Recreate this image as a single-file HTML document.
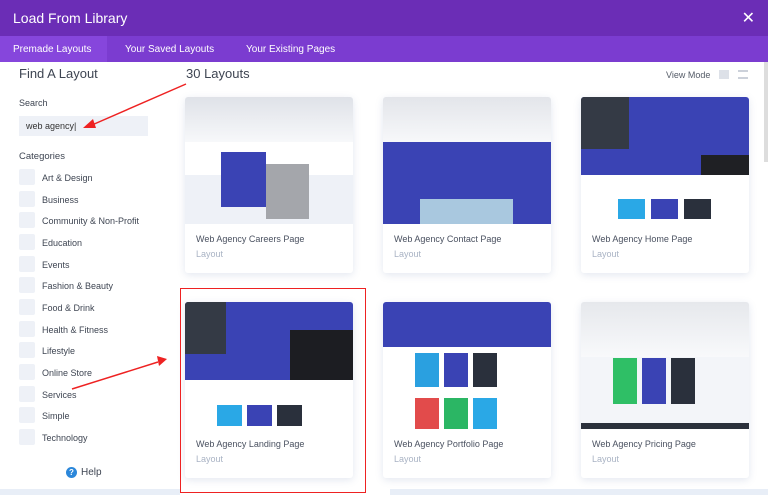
<!DOCTYPE html>
<html><head><meta charset="utf-8"><style>
*{margin:0;padding:0;box-sizing:border-box}
body{width:768px;height:495px;overflow:hidden;background:#fff;font-family:"Liberation Sans",sans-serif;position:relative;color:#32373c}
.hdr{position:absolute;left:0;top:0;width:768px;height:36px;background:#6b2db6;color:#fff;font-size:14px;padding:10px 13px}
.x{position:absolute;right:13px;top:8px;font-size:16px;color:#fff}
.tabs{position:absolute;left:0;top:36px;width:768px;height:26px;background:#7b3cd0;color:#fff;font-size:10px}
.tabs span{position:absolute;top:8px}
.act{position:absolute;left:0;top:0;width:107px;height:26px;background:#8646dc}
.abs{position:absolute}
.cat{position:absolute;left:19px;width:16px;height:16px;background:#eef1f7;border-radius:2px}
.cl{position:absolute;left:42px;font-size:9px;color:#3e4552}
.card{position:absolute;width:168px;height:176px;background:#fff;box-shadow:0 2px 8px rgba(100,120,170,.18);border-radius:3px;overflow:hidden}
.img{position:absolute;left:0;top:0;width:168px;height:127px;background:#f3f5f9;overflow:hidden}
.t{position:absolute;left:11px;top:137px;font-size:9px;color:#4a5160}
.l{position:absolute;left:11px;top:152px;font-size:9px;color:#a9b3c4}
.blue{background:#3a43b4}
</style></head><body>
<div class="hdr">Load From Library<span class="x">✕</span></div>
<div class="tabs"><div class="act"></div><span style="left:13px">Premade Layouts</span><span style="left:125px">Your Saved Layouts</span><span style="left:246px">Your Existing Pages</span></div>
<div class="abs" style="left:19px;top:66px;font-size:13px;color:#3e4552">Find A Layout</div>
<div class="abs" style="left:186px;top:66px;font-size:13px;color:#3e4552">30 Layouts</div>
<div class="abs" style="left:666px;top:70px;font-size:9px;color:#555c68">View Mode</div>
<div class="abs" style="left:719px;top:70px;width:10px;height:9px;background:#dde1e8"></div>
<div class="abs" style="left:738px;top:70px;width:10px;height:9px;border-top:2px solid #ccd1da;border-bottom:2px solid #ccd1da"></div>
<div class="abs" style="left:19px;top:98px;font-size:9px;color:#3e4552">Search</div>
<div class="abs" style="left:19px;top:116px;width:129px;height:20px;background:#eef1f7;font-size:9px;padding:5px 7px;color:#333">web agency|</div>
<div class="abs" style="left:19px;top:151px;font-size:9.5px;color:#3e4552">Categories</div>
<div class="cat" style="top:169px"></div><div class="cl" style="top:173px">Art &amp; Design</div>
<div class="cat" style="top:191px"></div><div class="cl" style="top:195px">Business</div>
<div class="cat" style="top:212px"></div><div class="cl" style="top:216px">Community &amp; Non-Profit</div>
<div class="cat" style="top:234px"></div><div class="cl" style="top:238px">Education</div>
<div class="cat" style="top:256px"></div><div class="cl" style="top:260px">Events</div>
<div class="cat" style="top:277px"></div><div class="cl" style="top:281px">Fashion &amp; Beauty</div>
<div class="cat" style="top:299px"></div><div class="cl" style="top:303px">Food &amp; Drink</div>
<div class="cat" style="top:321px"></div><div class="cl" style="top:325px">Health &amp; Fitness</div>
<div class="cat" style="top:342px"></div><div class="cl" style="top:346px">Lifestyle</div>
<div class="cat" style="top:364px"></div><div class="cl" style="top:368px">Online Store</div>
<div class="cat" style="top:386px"></div><div class="cl" style="top:390px">Services</div>
<div class="cat" style="top:407px"></div><div class="cl" style="top:411px">Simple</div>
<div class="cat" style="top:429px"></div><div class="cl" style="top:433px">Technology</div>
<div class="abs" style="left:66px;top:467px;width:11px;height:11px;border-radius:50%;background:#2b87da;color:#fff;font-size:8px;text-align:center;line-height:11px;font-weight:bold">?</div>
<div class="abs" style="left:81px;top:467px;font-size:10px;color:#3e4552">Help</div>
<div class="abs" style="left:0;top:489px;width:180px;height:6px;background:#e8eef7"></div>
<div class="abs" style="left:390px;top:489px;width:378px;height:6px;background:#e8eef7"></div>

<div class="card" style="left:185px;top:97px"><div class="img" style="background:#fff">
<div class="abs" style="left:0;top:0;width:168px;height:45px;background:linear-gradient(#dfe2e8,#f7f8fa)"></div>
<div class="abs" style="left:0;top:78px;width:168px;height:49px;background:#eef1f7"></div>
<div class="abs blue" style="left:36px;top:55px;width:45px;height:55px"></div>
<div class="abs" style="left:81px;top:67px;width:43px;height:55px;background:#a4a6ab"></div>
</div><div class="t">Web Agency Careers Page</div><div class="l">Layout</div></div>

<div class="card" style="left:383px;top:97px"><div class="img">
<div class="abs" style="left:0;top:0;width:168px;height:45px;background:linear-gradient(#e3e5ea,#f7f8fa)"></div>
<div class="abs blue" style="left:0;top:45px;width:168px;height:82px"></div>
<div class="abs" style="left:37px;top:102px;width:93px;height:25px;background:#a9c8df"></div>
</div><div class="t">Web Agency Contact Page</div><div class="l">Layout</div></div>

<div class="card" style="left:581px;top:97px"><div class="img" style="background:#fff">
<div class="abs blue" style="left:0;top:0;width:168px;height:78px"></div>
<div class="abs" style="left:0;top:0;width:48px;height:52px;background:#343a45"></div>
<div class="abs" style="left:120px;top:58px;width:48px;height:20px;background:#1f2024"></div>
<div class="abs" style="left:37px;top:102px;width:27px;height:20px;background:#2aa8e6"></div>
<div class="abs blue" style="left:70px;top:102px;width:27px;height:20px"></div>
<div class="abs" style="left:103px;top:102px;width:27px;height:20px;background:#2a303c"></div>
</div><div class="t">Web Agency Home Page</div><div class="l">Layout</div></div>

<div class="card" style="left:185px;top:302px"><div class="img" style="background:#fff">
<div class="abs blue" style="left:0;top:0;width:168px;height:78px"></div>
<div class="abs" style="left:0;top:0;width:41px;height:52px;background:#343a45"></div>
<div class="abs" style="left:105px;top:28px;width:63px;height:50px;background:#1c1d22"></div>
<div class="abs" style="left:32px;top:103px;width:25px;height:21px;background:#2aa8e6"></div>
<div class="abs blue" style="left:62px;top:103px;width:25px;height:21px"></div>
<div class="abs" style="left:92px;top:103px;width:25px;height:21px;background:#2a303c"></div>
</div><div class="t">Web Agency Landing Page</div><div class="l">Layout</div></div>

<div class="card" style="left:383px;top:302px"><div class="img" style="background:#fff">
<div class="abs blue" style="left:0;top:0;width:168px;height:45px"></div>
<div class="abs" style="left:32px;top:51px;width:24px;height:34px;background:#2aa0e0"></div>
<div class="abs blue" style="left:61px;top:51px;width:24px;height:34px"></div>
<div class="abs" style="left:90px;top:51px;width:24px;height:34px;background:#2a303c"></div>
<div class="abs" style="left:32px;top:96px;width:24px;height:31px;background:#e24b4b"></div>
<div class="abs" style="left:61px;top:96px;width:24px;height:31px;background:#2bb664"></div>
<div class="abs" style="left:90px;top:96px;width:24px;height:31px;background:#2aa8e6"></div>
</div><div class="t">Web Agency Portfolio Page</div><div class="l">Layout</div></div>

<div class="card" style="left:581px;top:302px"><div class="img">
<div class="abs" style="left:0;top:0;width:168px;height:55px;background:linear-gradient(#e6e8ec,#f8f9fb)"></div>
<div class="abs" style="left:32px;top:56px;width:24px;height:46px;background:#2fbf66"></div>
<div class="abs blue" style="left:61px;top:56px;width:24px;height:46px"></div>
<div class="abs" style="left:90px;top:56px;width:24px;height:46px;background:#2a303c"></div>
<div class="abs" style="left:0;top:121px;width:168px;height:6px;background:#2b313c"></div>
</div><div class="t">Web Agency Pricing Page</div><div class="l">Layout</div></div>

<div class="abs" style="left:180px;top:288px;width:186px;height:205px;border:1.5px solid #ee2222"></div>
<svg class="abs" style="left:0;top:0" width="768" height="495">
<g stroke="#ee2222" stroke-width="1.5" fill="#ee2222">
<line x1="186" y1="84" x2="92" y2="125"/><polygon points="83,128 93,119 96,128" stroke="none"/>
<line x1="72" y1="389" x2="158" y2="362"/><polygon points="167,359 157,356 159,366" stroke="none"/>
</g></svg>
<div class="abs" style="left:764px;top:62px;width:4px;height:100px;background:#ddd"></div>
</body></html>
